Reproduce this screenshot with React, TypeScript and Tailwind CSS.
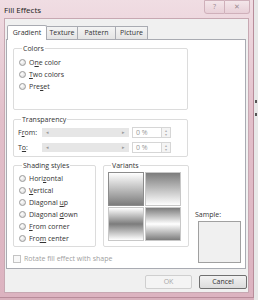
import React from "react";

const font = { fontFamily: '"Open Sans", "Liberation Sans", sans-serif' };

function Radio({ label }: { label: React.ReactNode }) {
  return (
    <div className="flex items-center h-[12px]">
      <span className="w-[7px] h-[7px] rounded-full border border-[#9a9a9a] bg-[radial-gradient(circle_at_35%_35%,#ffffff,#d4d4d4)] shrink-0" />
      <span className="ml-[3px] text-[7px] leading-[9px] text-[#333]">{label}</span>
    </div>
  );
}

function U({ c }: { c: string }) {
  return <span className="underline">{c}</span>;
}

function SliderRow({ label }: { label: React.ReactNode }) {
  return (
    <div className="flex items-center h-[15px]">
      <span className="w-[23px] text-[7px] leading-[9px] text-[#333]">{label}</span>
      <div className="ml-[1px] w-[87px] h-[9px] bg-[#e6e6e6] flex items-center justify-between px-[4px] text-[5px] text-[#9a9a9a]">
        <span>◂</span>
        <span>▸</span>
      </div>
      <div className="ml-[3px] w-[39px] h-[11px] border border-[#d6d6d6] bg-white flex items-center">
        <span className="pl-[3px] flex-1 text-[7px] leading-[9px] text-[#9a9a9a]">0 %</span>
        <div className="w-[9px] h-full border-l border-[#d6d6d6] flex flex-col items-center justify-center text-[4px] leading-[4px] text-[#b0b0b0] bg-[#f4f4f4]">
          <span>▴</span>
          <span>▾</span>
        </div>
      </div>
    </div>
  );
}

function Group({ title, className, children }: { title: string; className: string; children?: React.ReactNode }) {
  return (
    <fieldset className={"border border-[#dcdcdc] rounded-[2px] " + className}>
      <legend className="ml-[3px] px-[1px] text-[7px] leading-[9px] text-[#333]">{title}</legend>
      {children}
    </fieldset>
  );
}

export default function App() {
  return (
    <div className="w-[258px] h-[300px] flex bg-[#d8b0bc] overflow-hidden" style={font}>
      <div className="w-[254px] h-[298px] flex flex-col bg-[linear-gradient(180deg,#f0dde3_0%,#e2bfca_40%,#dcb3c0_100%)] border-r border-b border-[#b88c9a]">
        <div className="h-[18px] flex items-start shrink-0">
          <span className="ml-[4px] mt-[5px] text-[8px] leading-[10px] text-[#222]">Fill Effects</span>
          <div className="ml-auto mr-[3px] flex">
            <div className="w-[21px] h-[14px] border border-[#cfb0ba] rounded-bl-[3px] bg-[linear-gradient(180deg,#f4e6ea,#e8d0d8)] flex items-center justify-center text-[7px] text-[#9a8a90]">?</div>
            <div className="w-[25px] h-[14px] border border-l-0 border-[#cfb0ba] rounded-br-[3px] bg-[linear-gradient(180deg,#f4e6ea,#e8d0d8)] flex items-center justify-center text-[7px] text-[#9a8a90]">✕</div>
          </div>
        </div>
        <div className="ml-[4px] w-[245px] h-[275px] bg-[#f0f0f0] border border-[#c7a8b2] flex flex-col">
          <div className="h-[20px] flex items-end pl-[2px] shrink-0">
            <div className="w-[40px] h-[15px] bg-white border border-b-0 border-[#a9abb2] rounded-t-[2px] flex items-center justify-center text-[7px] text-[#333] relative top-[1px]">Gradient</div>
            <div className="w-[31px] h-[13px] bg-[linear-gradient(180deg,#f4f4f4,#e4e4e4)] border border-l-0 border-b-0 border-[#a9abb2] flex items-center justify-center text-[7px] text-[#333]">Texture</div>
            <div className="w-[38px] h-[13px] bg-[linear-gradient(180deg,#f4f4f4,#e4e4e4)] border border-l-0 border-b-0 border-[#a9abb2] flex items-center justify-center text-[7px] text-[#333]">Pattern</div>
            <div className="w-[32px] h-[13px] bg-[linear-gradient(180deg,#f4f4f4,#e4e4e4)] border border-l-0 border-b-0 border-[#a9abb2] flex items-center justify-center text-[7px] text-[#333]">Picture</div>
          </div>
          <div className="ml-[1px] w-[240px] h-[230px] bg-white border border-[#a9abb2] flex flex-col pl-[6px] shrink-0">
            <Group title="Colors" className="mt-[4px] w-[175px] h-[66px] pl-[5px] pt-[3px]">
              <Radio label={<>O<U c="n" />e color</>} />
              <Radio label={<><U c="T" />wo colors</>} />
              <Radio label={<>Pre<U c="s" />et</>} />
            </Group>
            <Group title="Transparency" className="mt-[5px] w-[175px] h-[42px] pl-[4px] pt-[1px]">
              <SliderRow label={<>F<U c="r" />om:</>} />
              <SliderRow label={<>T<U c="o" />:</>} />
            </Group>
            <div className="flex mt-[4px]">
              <Group title="Shading styles" className="w-[83px] h-[86px] pl-[5px] pt-[2px]">
                <Radio label={<>Hori<U c="z" />ontal</>} />
                <Radio label={<><U c="V" />ertical</>} />
                <Radio label={<>Diagonal <U c="u" />p</>} />
                <Radio label={<>Diagonal <U c="d" />own</>} />
                <Radio label={<><U c="F" />rom corner</>} />
                <Radio label={<>Fro<U c="m" /> center</>} />
              </Group>
              <Group title="Variants" className="ml-[7px] w-[86px] h-[86px] pl-[4px] pt-[2px]">
                <div className="grid grid-cols-[36px_36px] gap-[1px]">
                  <div className="h-[34px] border border-[#8c8c8c] bg-[linear-gradient(180deg,#ffffff,#7c7c7c)]" />
                  <div className="h-[34px] border border-[#c8c8c8] bg-[linear-gradient(180deg,#7c7c7c,#ffffff)]" />
                  <div className="h-[34px] border border-[#c8c8c8] bg-[linear-gradient(180deg,#ffffff,#7c7c7c_50%,#ffffff)]" />
                  <div className="h-[34px] border border-[#c8c8c8] bg-[linear-gradient(180deg,#7c7c7c,#ffffff_50%,#7c7c7c)]" />
                </div>
              </Group>
              <div className="ml-[6px] flex flex-col pt-[49px]">
                <span className="text-[7px] leading-[9px] text-[#333]">Sample:</span>
                <div className="mt-[2px] ml-[3px] w-[43px] h-[42px] border border-[#a0a0a0] bg-[#f0f0f0]" />
              </div>
            </div>
            <div className="flex items-center -mt-[9px]">
              <span className="w-[8px] h-[8px] border border-[#c4c4c4] bg-[#f8f8f8]" />
              <span className="ml-[3px] text-[7px] leading-[9px] text-[#a0a0a0]">Rotate fill effect with shape</span>
            </div>
          </div>
          <div className="flex justify-end pr-[1px] mt-[6px] gap-[7px]">
            <div className="w-[47px] h-[14px] border border-[#cfcfcf] rounded-[2px] bg-[#f4f4f4] flex items-center justify-center text-[7px] text-[#a8a8a8]">OK</div>
            <div className="w-[48px] h-[14px] border border-[#707070] rounded-[2px] bg-[linear-gradient(180deg,#f2f2f2,#dcdcdc)] flex items-center justify-center text-[7px] text-[#333]">Cancel</div>
          </div>
        </div>
      </div>
      <div className="flex-1 bg-[#e8e8e8] flex flex-col pt-[100px] gap-[10px] pl-[1px]">
        <span className="w-[2px] h-[3px] bg-[#555]" />
        <span className="w-[2px] h-[3px] bg-[#555]" />
      </div>
    </div>
  );
}
